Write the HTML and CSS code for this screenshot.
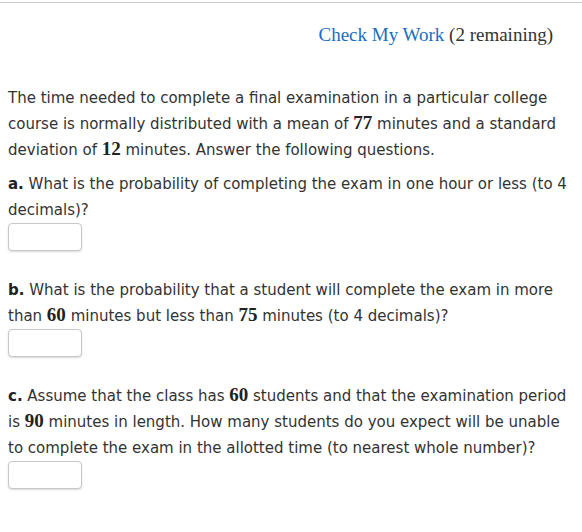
FILE: index.html
```html
<!DOCTYPE html>
<html>
<head>
<meta charset="utf-8">
<link rel="stylesheet" href="styles.css">
</head>
<body>
<div class="page">
  <div class="topbar">
    <span class="check"><a class="link">Check My Work</a> (2 remaining)</span>
  </div>
  <p class="intro">The time needed to complete a final examination in a particular college course is normally distributed with a mean of <span class="num">77</span> minutes and a standard deviation of <span class="num">12</span> minutes. Answer the following questions.</p>
  <div class="q">
    <p class="qtext"><b>a.</b> What is the probability of completing the exam in one hour or less (to 4 decimals)?</p>
    <input class="ans" type="text">
  </div>
  <div class="q">
    <p class="qtext"><b>b.</b> What is the probability that a student will complete the exam in more than <span class="num">60</span> minutes but less than <span class="num">75</span> minutes (to 4 decimals)?</p>
    <input class="ans" type="text">
  </div>
  <div class="q">
    <p class="qtext"><b>c.</b> Assume that the class has <span class="num">60</span> students and that the examination period is <span class="num">90</span> minutes in length. How many students do you expect will be unable to complete the exam in the allotted time (to nearest whole number)?</p>
    <input class="ans" type="text">
  </div>
</div>
</body>
</html>
```

FILE: styles.css
```css
html, body {
  margin: 0;
  padding: 0;
  background: #fff;
}
.page {
  font-family: "DejaVu Sans", Verdana, sans-serif;
  font-size: 15px;
  color: #333;
  padding: 0 8px;
  border-top: 1px solid #ccc;
  margin-top: 2px;
}
.topbar {
  display: flex;
  justify-content: flex-end;
  padding: 19px 21px 0 0;
  height: 36px;
  margin-bottom: 27px;
}
.check {
  font-family: "Liberation Serif", Georgia, serif;
  font-size: 19px;
  color: #333;
  line-height: 26px;
}
.link {
  color: #1a6dc2;
}
p {
  margin: 0;
  line-height: 26px;
}
.intro {
  margin-bottom: 8px;
}
.num {
  font-family: "Liberation Serif", "Times New Roman", serif;
  font-size: 19px;
  font-weight: bold;
  color: #222;
  line-height: 1;
}
.qtext b {
  color: #222;
}
.q {
  margin-bottom: 26px;
}
.ans {
  display: block;
  box-sizing: border-box;
  width: 74px;
  height: 28px;
  margin: 0;
  border: 1px solid #c8c8c8;
  border-radius: 4px;
  box-shadow: 0 1px 2px rgba(0,0,0,0.15);
  background: #fff;
}
```
